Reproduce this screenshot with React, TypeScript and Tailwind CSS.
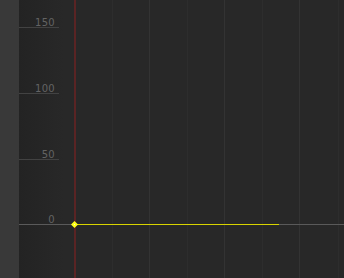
import React from 'react';

const minorX = [112, 187, 262, 338];
const majorX = [150, 225, 300];
const labels = [
  { v: '150', y: 27 },
  { v: '100', y: 93 },
  { v: '50', y: 159 },
  { v: '0', y: 224 },
];

export default function App() {
  return (
    <div className="flex w-[344px] h-[278px] overflow-hidden bg-[#282828]" style={{ fontFamily: '"DejaVu Sans", sans-serif' }}>
      <div className="w-[19px] h-full bg-[#393939] shrink-0" />
      <div className="flex-1 h-full">
        <svg width="325" height="278" viewBox="19 0 325 278" className="block">
          <defs>
            <linearGradient id="gut" x1="0" x2="1" y1="0" y2="0">
              <stop offset="0" stopColor="#232323" />
              <stop offset="1" stopColor="#282828" />
            </linearGradient>
          </defs>
          <rect x="19" y="0" width="45" height="278" fill="url(#gut)" />
          {minorX.map((x) => (
            <rect key={x} x={x} y="0" width="1" height="278" fill="#2d2d2d" />
          ))}
          {majorX.map((x) => (
            <rect key={x} x={x - 1} y="0" width="1" height="278" fill="#333333" />
          ))}
          {labels.map((l) => (
            <g key={l.v}>
              <rect x="19" y={l.y} width={l.v === '0' ? 325 : 40} height="1" fill={l.v === '0' ? '#5a5a5a' : '#424242'} />
              <text x="55" y={l.y - 1} textAnchor="end" fontSize="10" fill="#636363" letterSpacing="0.3">{l.v}</text>
            </g>
          ))}
          <rect x="74" y="0" width="2" height="278" fill="#5a2424" />
          <rect x="75" y="224" width="204" height="1" fill="#d8d400" />
          <polygon points="74.5,221 78,224.5 74.5,228 71,224.5" fill="#ffff1a" />
          <rect x="74" y="224" width="1" height="1" fill="#fffbd0" />
        </svg>
      </div>
    </div>
  );
}
